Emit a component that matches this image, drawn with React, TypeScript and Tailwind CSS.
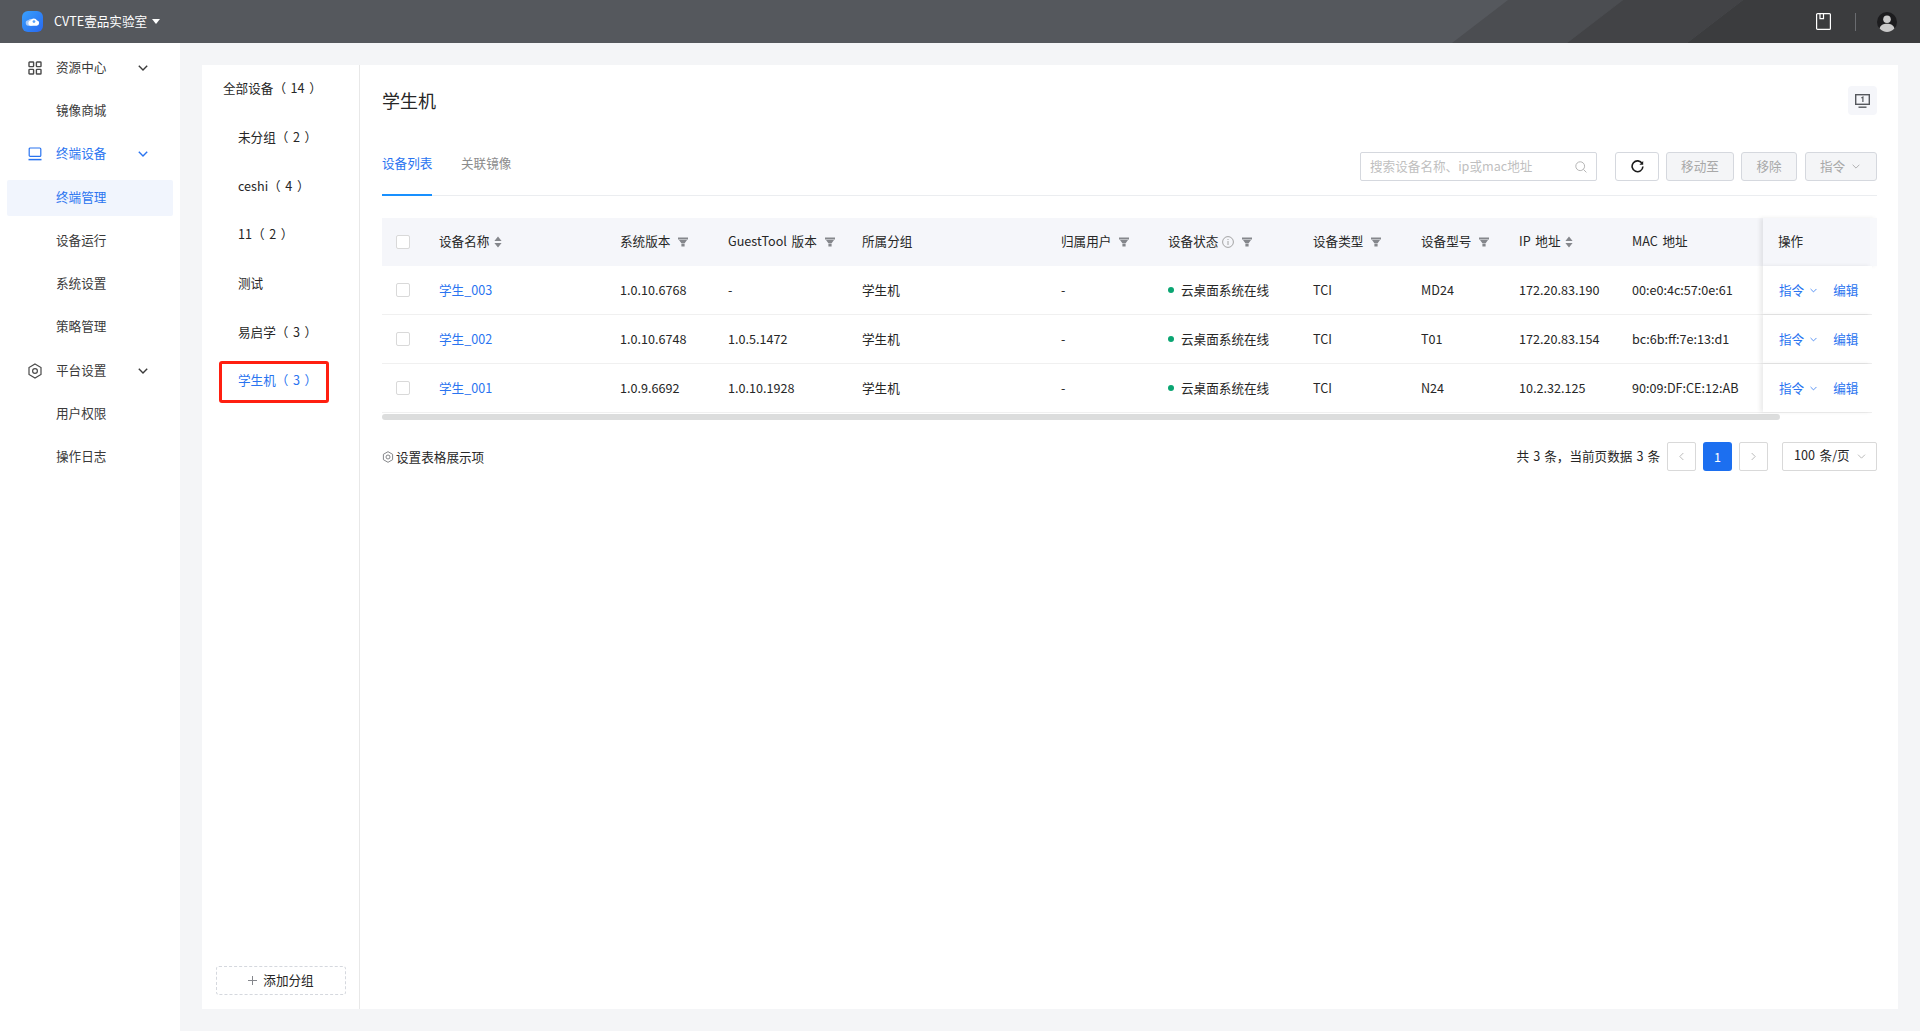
import React from "react";

const Filter = () => (
  <svg viewBox="0 0 10 10" className="w-[10px] h-[10px] shrink-0 text-[#85878c]" fill="currentColor">
    <path d="M0 .5h10v2H0zM1 3h8L6.8 6H3.2zM3.4 6.6h3.2v3H3.4z" />
  </svg>
);
const Sort = () => (
  <svg viewBox="0 0 8 12" className="w-[8px] h-[12px] shrink-0 text-[#85878c]" fill="currentColor">
    <path d="M4 .5 7.6 5H.4zM4 11.5.4 7h7.2z" />
  </svg>
);
const Chevron = ({ className = "", w = "1.1" }: { className?: string; w?: string }) => (
  <svg viewBox="0 0 10 6" className={className} fill="none" stroke="currentColor" strokeWidth={w}>
    <path d="M.8.8 5 5 9.2.8" />
  </svg>
);
const Checkbox = () => <span className="block w-[14px] h-[14px] ml-[14px] border border-[#d9d9d9] rounded-[2px] bg-white" />;

const nav = [
  { t: "资源中心", icon: "grid", chev: true },
  { t: "镜像商城" },
  { t: "终端设备", icon: "laptop", chev: true, blue: true },
  { t: "终端管理", active: true },
  { t: "设备运行" },
  { t: "系统设置" },
  { t: "策略管理" },
  { t: "平台设置", icon: "hex", chev: true },
  { t: "用户权限" },
  { t: "操作日志" },
];

const NavIcon = ({ name }: { name: string }) => {
  if (name === "grid")
    return (
      <svg viewBox="0 0 14 14" className="w-[14px] h-[14px] text-[#4a4a4a]" fill="none" stroke="currentColor" strokeWidth="1.4">
        <rect x="1" y="1" width="4.6" height="4.6" rx=".6" />
        <rect x="8.4" y="1" width="4.6" height="4.6" rx=".6" />
        <rect x="1" y="8.4" width="4.6" height="4.6" rx=".6" />
        <rect x="8.4" y="8.4" width="4.6" height="4.6" rx=".6" />
      </svg>
    );
  if (name === "laptop")
    return (
      <svg viewBox="0 0 14 14" className="w-[14px] h-[14px] text-[#2a74f0]" fill="none" stroke="currentColor" strokeWidth="1.2">
        <rect x="1.2" y="1" width="11.6" height="8.4" rx="1" />
        <path d="M.5 12.6h13" strokeWidth="1.5" />
      </svg>
    );
  return (
    <svg viewBox="0 0 14 16" className="w-[14px] h-[16px] text-[#4a4a4a]" fill="none" stroke="currentColor" strokeWidth="1.2">
      <path d="M7 1l6 3.5v7L7 15l-6-3.5v-7z" />
      <circle cx="7" cy="8" r="2.4" />
    </svg>
  );
};

const groups = [
  { t: "全部设备（ 14 ）", top: true },
  { t: "未分组（ 2 ）" },
  { t: "ceshi（ 4 ）" },
  { t: "11（ 2 ）" },
  { t: "测试" },
  { t: "易启学（ 3 ）" },
  { t: "学生机（ 3 ）", active: true },
];

const headCols = "grid grid-cols-[57px_181px_108px_134px_199px_107px_145px_108px_98px_113px_131px_114px]";
const rowCols = "grid grid-cols-[57px_181px_108px_134px_199px_107px_145px_108px_98px_113px_131px_109px]";

const rows = [
  ["学生_003", "1.0.10.6768", "-", "MD24", "172.20.83.190", "00:e0:4c:57:0e:61"],
  ["学生_002", "1.0.10.6748", "1.0.5.1472", "T01", "172.20.83.154", "bc:6b:ff:7e:13:d1"],
  ["学生_001", "1.0.9.6692", "1.0.10.1928", "N24", "10.2.32.125", "90:09:DF:CE:12:AB"],
];

const Head = ({ t, icon }: { t: string; icon?: "f" | "s" }) => (
  <div className="flex items-center gap-[5px] whitespace-nowrap">
    <span className="pb-[2px]">{t}</span>
    {icon === "f" && <span className="ml-[3px] flex"><Filter /></span>}
    {icon === "s" && <Sort />}
  </div>
);

export default function App() {
  return (
    <div className="h-screen flex flex-col overflow-hidden text-[12.6px] leading-[18px] [word-spacing:1.8px] text-[#262626] bg-white font-[family-name:'Noto_Sans_CJK_SC',sans-serif]">
      <header className="relative h-[43px] shrink-0 flex items-center bg-[#55585d] text-white overflow-hidden">
        <svg className="absolute right-0 top-0 h-[43px] w-[468px]" viewBox="0 0 468 43" preserveAspectRatio="none">
          <path d="M0 43 56 0H171L115 43z" fill="#4b4d51" />
          <path d="M115 43 171 0H291L235 43z" fill="#424346" />
          <path d="M235 43 291 0H468V43z" fill="#3b3c3e" />
        </svg>
        <div className="relative ml-[22px] w-[21px] h-[21px] rounded-[6px] bg-gradient-to-br from-[#3ba0fb] to-[#2a67ef] flex items-center justify-center">
          <svg viewBox="0 0 16 12" className="w-[15px] h-[11px]">
            <path d="M3.6 10.5a2.9 2.9 0 0 1-.2-5.8A3 3 0 0 1 8 4v6.5z" fill="#a9ccfb" />
            <path d="M5.2 10.5a3 3 0 0 1 .6-5.6A4.2 4.2 0 0 1 13 4.8a2.9 2.9 0 0 1-.4 5.7z" fill="#ffffff" />
            <circle cx="9.6" cy="6" r="1.5" fill="#5aa2f8" />
          </svg>
        </div>
        <span className="relative ml-[11px] pb-[2px] whitespace-nowrap">CVTE壹品实验室</span>
        <svg viewBox="0 0 8 5" className="relative ml-[5px] w-[8px] h-[5px]" fill="#fff"><path d="M0 0h8L4 5z" /></svg>
        <div className="relative ml-auto flex items-center mr-[23px]">
          <svg viewBox="0 0 15 17" className="w-[15px] h-[17px]" fill="none" stroke="#fff" strokeWidth="1.2">
            <rect x=".6" y=".6" width="13.8" height="15.8" rx="1" />
            <path d="M4 .6v5h3.5v-5" />
          </svg>
          <span className="ml-[24px] w-px h-[18px] bg-[#6a6c70]" />
          <svg viewBox="0 0 20 20" className="ml-[21px] w-[20px] h-[20px]">
            <circle cx="10" cy="10" r="10" fill="#1c1c1e" />
            <circle cx="10" cy="7.2" r="3.8" fill="#c9c9c9" />
            <path d="M2.6 16.6C3.4 13 6.4 11.8 10 11.8s6.6 1.2 7.4 4.8A10 10 0 0 1 10 20a10 10 0 0 1-7.4-3.4z" fill="#c9c9c9" />
          </svg>
        </div>
      </header>

      <div className="flex-1 flex min-h-0">
        <aside className="w-[180px] shrink-0 bg-white pt-[3px]">
          {nav.map((n) => (
            <div key={n.t} className="h-[43.3px] px-[7px] flex items-center">
              <div className={`flex-1 h-[36px] flex items-center rounded-[2px] ${n.active ? "bg-[#f1f5fd]" : ""} ${n.active || n.blue ? "text-[#2a74f0]" : "text-[#3a3a3a]"}`}>
                <span className="w-[49px] pl-[21px] flex items-center">{n.icon && <NavIcon name={n.icon} />}</span>
                <span className="whitespace-nowrap pb-[2px]">{n.t}</span>
                {n.chev && <Chevron w="1.4" className={`ml-auto mr-[25px] w-[10px] h-[6px] ${n.blue ? "text-[#2a74f0]" : "text-[#3a3a3a]"}`} />}
              </div>
            </div>
          ))}
        </aside>

        <main className="flex-1 min-w-0 bg-[#f4f5f7] p-[22px]">
          <div className="h-full bg-white flex">
            <div className="relative w-[158px] shrink-0 border-r border-[#e8e8e8] flex flex-col">
              <div>
                {groups.map((g) => (
                  <div key={g.t} className={`flex items-center whitespace-nowrap ${g.top ? "pl-[21px] h-[49px] pb-[4px]" : "pl-[36px] h-[48.6px] pb-[2px]"} ${g.active ? "text-[#2a74f0]" : ""}`}>
                    {g.t}
                  </div>
                ))}
              </div>
              <div className="absolute left-[17px] top-[296px] w-[110px] h-[42px] border-[3px] border-[#ff1f10] rounded-[3px]" />
              <div className="mt-auto ml-[14px] mr-[13px] mb-[14px] h-[29px] border border-dashed border-[#d5d8de] rounded-[3px] flex items-center justify-center gap-[6px]">
                <svg viewBox="0 0 9 9" className="w-[9px] h-[9px] text-[#85878c]" stroke="currentColor" fill="none"><path d="M4.5 0v9M0 4.5h9" /></svg>
                <span className="pb-[2px]">添加分组</span>
              </div>
            </div>

            <div className="flex-1 min-w-0 pl-[22px] pr-[21px] flex flex-col">
              <div className="mt-[21px] h-[29px] flex items-center justify-between">
                <h1 className="text-[18px] font-normal leading-[29px]">学生机</h1>
                <div className="w-[29px] h-[29px] rounded-[4px] bg-[#f5f6fa] flex items-center justify-center">
                  <svg viewBox="0 0 15 14" className="w-[15px] h-[14px] text-[#55585d]" fill="none" stroke="currentColor">
                    <rect x=".7" y=".7" width="13.6" height="9.6" strokeWidth="1.4" />
                    <path d="M3.5 13.2h8" strokeWidth="1.4" />
                    <path d="M6.4 4 7.9 3v5" strokeWidth="1.2" />
                  </svg>
                </div>
              </div>

              <div className="mt-[37px] h-[44px] border-b border-[#ebedf0] flex items-start justify-between">
                <div className="flex h-[43px] gap-[29px]">
                  <div className="text-[#2a74f0] pt-[2px] border-b-2 border-[#1890ff] w-[50px] whitespace-nowrap h-[44px]">设备列表</div>
                  <div className="text-[#8c8c8c] pt-[2px] whitespace-nowrap">关联镜像</div>
                </div>
                <div className="flex items-center h-[29px]">
                  <div className="w-[237px] h-[29px] border border-[#d5d8de] rounded-[2px] flex items-center px-[9px] text-[#bfbfbf] whitespace-nowrap">
                    <span className="pb-[2px]">搜索设备名称、ip或mac地址</span>
                    <svg viewBox="0 0 12 12" className="ml-auto w-[12px] h-[12px]" fill="none" stroke="#b5b5b5" strokeWidth="1">
                      <circle cx="5.2" cy="5.2" r="4.4" /><path d="M8.4 8.4 11.4 11.4" />
                    </svg>
                  </div>
                  <div className="ml-[18px] w-[44px] h-[29px] border border-[#d5d8de] rounded-[3px] flex items-center justify-center">
                    <svg viewBox="0 0 13 13" className="w-[13px] h-[13px]" fill="none" stroke="#1c1c1c" strokeWidth="1.6">
                      <path d="M11.2 3.6A5.4 5.4 0 1 0 11.9 6.5" />
                      <path d="M12.2 .9v3.8H8.4z" fill="#1c1c1c" stroke="none" />
                    </svg>
                  </div>
                  <div className="ml-[7px] w-[68px] h-[29px] border border-[#d5d8de] bg-[#f4f5f7] rounded-[3px] flex items-center justify-center text-[#a8a8a8]"><span className="pb-[2px]">移动至</span></div>
                  <div className="ml-[7px] w-[56px] h-[29px] border border-[#d5d8de] bg-[#f4f5f7] rounded-[3px] flex items-center justify-center text-[#a8a8a8]"><span className="pb-[2px]">移除</span></div>
                  <div className="ml-[8px] w-[72px] h-[29px] border border-[#d5d8de] bg-[#f4f5f7] rounded-[3px] flex items-center justify-center gap-[7px] pr-[2px] text-[#a8a8a8]">
                    <span className="pb-[2px]">指令</span><Chevron className="w-[8px] h-[5px]" />
                  </div>
                </div>
              </div>

              <div className="mt-[22px]">
                <div className={`${headCols} h-[48px] items-center bg-[#f5f6fa]`}>
                  <Checkbox />
                  <Head t="设备名称" icon="s" />
                  <Head t="系统版本" icon="f" />
                  <Head t="GuestTool 版本" icon="f" />
                  <Head t="所属分组" />
                  <Head t="归属用户" icon="f" />
                  <div className="flex items-center whitespace-nowrap">
                    <span className="pb-[2px]">设备状态</span>
                    <svg viewBox="0 0 12 12" className="ml-[4px] w-[12px] h-[12px] text-[#9a9a9a]" fill="none" stroke="currentColor" strokeWidth=".9">
                      <circle cx="6" cy="6" r="5.4" /><path d="M6 5v4M6 3v1" />
                    </svg>
                    <span className="ml-[8px] flex"><Filter /></span>
                  </div>
                  <Head t="设备类型" icon="f" />
                  <Head t="设备型号" icon="f" />
                  <Head t="IP 地址" icon="s" />
                  <Head t="MAC 地址" />
                  <div className="h-full pl-[15px] flex items-center shadow-[-3px_0_4px_rgba(0,0,0,0.08)] border-r-[7px] border-[#f7f8fb] bg-[#f5f6fa]"><span className="pb-[2px]">操作</span></div>
                </div>
                {rows.map((r) => (
                  <div key={r[0]} className={`${rowCols} h-[49px] items-center border-b border-[#f0f0f0] w-[1490px]`}>
                    <Checkbox />
                    <span className="text-[#2a74f0]">{r[0]}</span>
                    <span>{r[1]}</span>
                    <span>{r[2]}</span>
                    <span>学生机</span>
                    <span>-</span>
                    <div className="flex items-center whitespace-nowrap">
                      <span className="w-[6px] h-[6px] rounded-full bg-[#0aa572] mr-[7px]" />
                      <span>云桌面系统在线</span>
                    </div>
                    <span>TCI</span>
                    <span>{r[3]}</span>
                    <span>{r[4]}</span>
                    <span className="whitespace-nowrap">{r[5]}</span>
                    <div className="h-full pl-[16px] flex items-center text-[#2a74f0] bg-white shadow-[-3px_0_4px_rgba(0,0,0,0.08)] whitespace-nowrap">
                      <span>指令</span>
                      <Chevron className="ml-[6px] w-[7px] h-[5px]" />
                      <span className="ml-[16px]">编辑</span>
                    </div>
                  </div>
                ))}
                <div className="mt-[1px] h-[6px] w-[1398px] rounded-[3px] bg-[#dcdddd]" />
              </div>

              <div className="mt-[22px] h-[29px] flex items-center">
                <svg viewBox="0 0 12 12" className="w-[12px] h-[12px] text-[#77797d]" fill="none" stroke="currentColor" strokeWidth=".9">
                  <path d="M6 .7l4.6 2.6v5.4L6 11.3 1.4 8.7V3.3z" /><circle cx="6" cy="6" r="2" />
                </svg>
                <span className="ml-[2px] whitespace-nowrap">设置表格展示项</span>
                <span className="ml-auto whitespace-nowrap pb-[2px] [word-spacing:1.2px]">共 3 条，当前页数据 3 条</span>
                <div className="ml-[7px] w-[29px] h-[29px] border border-[#d9d9d9] rounded-[2px] flex items-center justify-center">
                  <Chevron className="w-[9px] h-[5px] rotate-90 text-[#b5b5b5]" />
                </div>
                <div className="ml-[7px] w-[29px] h-[29px] rounded-[3px] bg-[#1c6ff0] text-white flex items-center justify-center">1</div>
                <div className="ml-[7px] w-[29px] h-[29px] border border-[#d9d9d9] rounded-[2px] flex items-center justify-center">
                  <Chevron className="w-[9px] h-[5px] -rotate-90 text-[#b5b5b5]" />
                </div>
                <div className="ml-[14px] w-[95px] h-[29px] border border-[#d9d9d9] rounded-[2px] flex items-center pl-[11px] whitespace-nowrap">
                  <span className="pb-[3px]">100 条/页</span>
                  <Chevron className="ml-auto mr-[10px] w-[9px] h-[5px] text-[#b5b5b5]" />
                </div>
              </div>
            </div>
          </div>
        </main>
      </div>
    </div>
  );
}
